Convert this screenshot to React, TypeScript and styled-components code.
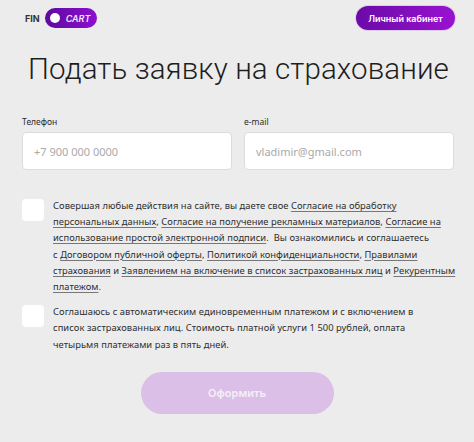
import React from "react";
import styled, { createGlobalStyle } from "styled-components";

const Global = createGlobalStyle`
  html, body { margin: 0; padding: 0; background: #ececec; }
  body { font-family: "Noto Sans", "Open Sans", sans-serif; color: #2a2a2a; }
  * { box-sizing: border-box; }
`;

const Page = styled.div`
  width: 474px;
  height: 442px;
  background: #ececec;
  display: flex;
  flex-direction: column;
  padding: 6px 19px 0 22px;
`;

const TopBar = styled.header`
  display: flex;
  align-items: center;
  justify-content: space-between;
  height: 24px;
`;

const Switcher = styled.div`
  display: flex;
  align-items: center;
  gap: 5px;
  padding-left: 3px;
`;

const SwitchLabel = styled.span`
  font-family: Inter, "Noto Sans", sans-serif;
  font-size: 9px;
  font-weight: 700;
  color: #333;
`;

const Pill = styled.div`
  width: 52px;
  height: 20px;
  border-radius: 10px;
  background: linear-gradient(90deg, #5e0a9e, #8d0fd0);
  display: flex;
  align-items: center;
  padding-left: 5px;
  gap: 6px;
`;

const Knob = styled.span`
  width: 10px;
  height: 10px;
  border-radius: 50%;
  background: #fff;
`;

const PillText = styled.span`
  font-family: Inter, "Noto Sans", sans-serif;
  font-style: italic;
  font-weight: 600;
  font-size: 9px;
  color: #f2e6ff;
`;

const CabinetButton = styled.button`
  width: 99px;
  height: 24px;
  border: none;
  border-radius: 12px;
  background: linear-gradient(90deg, #6a0aa8, #9a12d0);
  color: #fff;
  font-family: Inter, "Noto Sans", sans-serif;
  font-size: 9px;
  font-weight: 600;
  box-shadow: 0 0 0 1px rgba(140, 40, 200, 0.15);
`;

const Title = styled.h1`
  margin: 22px 0 0;
  text-align: center;
  font-family: Roboto, sans-serif;
  font-weight: 300;
  font-size: 29.5px;
  line-height: 34px;
  color: #1e1e1e;
  letter-spacing: 0.1px;
`;

const Fields = styled.div`
  display: grid;
  grid-template-columns: 210px 210px;
  gap: 12px;
  margin-top: 31px;
`;

const Field = styled.label`
  display: flex;
  flex-direction: column;
  gap: 5px;
`;

const FieldLabel = styled.span`
  font-family: "Noto Sans", sans-serif;
  font-size: 8.5px;
  line-height: 10px;
  color: #2b2b2b;
`;

const Input = styled.input`
  height: 38px;
  border: 1px solid #dcdcdc;
  border-radius: 4px;
  background: #fff;
  padding: 0 11px;
  font-family: "Noto Sans", sans-serif;
  font-size: 11px;
  outline: none;
  &::placeholder { color: #a9a9a9; }
`;

const Consent = styled.div<{ $top: number }>`
  display: flex;
  align-items: flex-start;
  gap: 9px;
  margin-top: ${(p) => p.$top}px;
`;

const Box = styled.span`
  flex: none;
  width: 22px;
  height: 22px;
  border-radius: 4px;
  background: #fff;
  margin-top: 1px;
`;

const ConsentText = styled.p`
  margin: 0;
  white-space: nowrap;
  font-family: "Noto Sans", sans-serif;
  font-size: 9.35px;
  line-height: 16.2px;
  color: #2e2e2e;
  letter-spacing: 0.05px;
`;

const DocLink = styled.a`
  color: #2e2e2e;
  text-decoration: underline;
  text-decoration-color: #777;
  text-underline-offset: 2px;
`;

const SubmitRow = styled.div`
  display: flex;
  justify-content: center;
  margin-top: 19px;
  padding-right: 3px;
`;

const Submit = styled.button`
  width: 193px;
  height: 42px;
  border: none;
  border-radius: 21px;
  background: #dbbfe6;
  color: #f5eefa;
  font-family: Inter, "Noto Sans", sans-serif;
  font-size: 11px;
  font-weight: 600;
`;

export default function App() {
  return (
    <>
      <Global />
      <Page>
        <TopBar>
          <Switcher>
            <SwitchLabel>FIN</SwitchLabel>
            <Pill>
              <Knob />
              <PillText>CART</PillText>
            </Pill>
          </Switcher>
          <CabinetButton>Личный кабинет</CabinetButton>
        </TopBar>

        <Title>Подать заявку на страхование</Title>

        <Fields>
          <Field>
            <FieldLabel>Телефон</FieldLabel>
            <Input placeholder="+7 900 000 0000" />
          </Field>
          <Field>
            <FieldLabel>e-mail</FieldLabel>
            <Input placeholder="vladimir@gmail.com" />
          </Field>
        </Fields>

        <Consent $top={28}>
          <Box />
          <ConsentText>
            Совершая любые действия на сайте, вы даете свое{" "}
            <DocLink>
              Согласие на обработку
              <br />
              персональных данных
            </DocLink>
            , <DocLink>Согласие на получение рекламных материалов</DocLink>,{" "}
            <DocLink>
              Согласие на
              <br />
              использование простой электронной подписи
            </DocLink>
            .&nbsp; Вы ознакомились и соглашаетесь
            <br />с <DocLink>Договором публичной оферты</DocLink>,{" "}
            <DocLink>Политикой конфиденциальности</DocLink>,{" "}
            <DocLink>
              Правилами
              <br />
              страхования
            </DocLink>{" "}
            и <DocLink>Заявлением на включение в список застрахованных лиц</DocLink> и{" "}
            <DocLink>
              Рекурентным
              <br />
              платежом
            </DocLink>
            .
          </ConsentText>
        </Consent>

        <Consent $top={9}>
          <Box />
          <ConsentText>
            Соглашаюсь с автоматическим единовременным платежом и с включением в
            <br />
            список застрахованных лиц. Стоимость платной услуги 1 500 рублей, оплата
            <br />
            четырьмя платежами раз в пять дней.
          </ConsentText>
        </Consent>

        <SubmitRow>
          <Submit>Оформить</Submit>
        </SubmitRow>
      </Page>
    </>
  );
}
